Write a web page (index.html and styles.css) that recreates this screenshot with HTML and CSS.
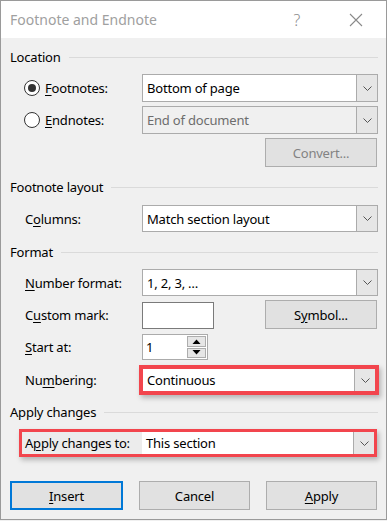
FILE: index.html
```html
<!DOCTYPE html>
<html>
<head>
<meta charset="utf-8">
<link rel="stylesheet" href="styles.css">
</head>
<body>
<div class="window">
  <div class="titlebar">
    <span class="title">Footnote and Endnote</span>
    <span class="help">?</span>
    <svg class="close" width="14" height="14" viewBox="0 0 14 14"><path d="M1 1L13 13M13 1L1 13" stroke="#8a8a8a" stroke-width="1.1" fill="none"/></svg>
  </div>
  <div class="content">
    <div class="group g-location"><span class="gl">Location</span><span class="line"></span></div>

    <div class="row r-foot">
      <label class="rlabel"><span class="radio checked"></span><span><u>F</u>ootnotes:</span></label>
      <div class="select"><span class="val">Bottom of page</span><span class="drop"><svg width="9" height="5" viewBox="0 0 9 5"><path d="M0.5 0.5L4.5 4.5L8.5 0.5" stroke="#555" fill="none"/></svg></span></div>
    </div>
    <div class="row r-end">
      <label class="rlabel"><span class="radio"></span><span><u>E</u>ndnotes:</span></label>
      <div class="select disabled"><span class="val">End of document</span><span class="drop"><svg width="9" height="5" viewBox="0 0 9 5"><path d="M0.5 0.5L4.5 4.5L8.5 0.5" stroke="#555" fill="none"/></svg></span></div>
    </div>
    <div class="row r-convert">
      <div class="btn disabled">Convert...</div>
    </div>

    <div class="group g-layout"><span class="gl">Footnote layout</span><span class="line"></span></div>
    <div class="row r-columns">
      <span class="label">C<u>o</u>lumns:</span>
      <div class="select"><span class="val">Match section layout</span><span class="drop"><svg width="9" height="5" viewBox="0 0 9 5"><path d="M0.5 0.5L4.5 4.5L8.5 0.5" stroke="#555" fill="none"/></svg></span></div>
    </div>

    <div class="group g-format"><span class="gl">Format</span><span class="line"></span></div>
    <div class="row r-number">
      <span class="label"><u>N</u>umber format:</span>
      <div class="select"><span class="val">1, 2, 3, …</span><span class="drop"><svg width="9" height="5" viewBox="0 0 9 5"><path d="M0.5 0.5L4.5 4.5L8.5 0.5" stroke="#555" fill="none"/></svg></span></div>
    </div>
    <div class="row r-custom">
      <span class="label">C<u>u</u>stom mark:</span>
      <div class="textbox"></div>
      <div class="btn symbol">S<u>y</u>mbol...</div>
    </div>
    <div class="row r-start">
      <span class="label"><u>S</u>tart at:</span>
      <div class="spin">
        <span class="spinval">1</span>
        <span class="spinbtns">
          <span class="sb"><svg width="9" height="5" viewBox="0 0 9 5"><path d="M0.5 5L4.5 0.5L8.5 5Z" fill="#000"/></svg></span>
          <span class="sb"><svg width="9" height="5" viewBox="0 0 9 5"><path d="M0.5 0L4.5 4.5L8.5 0Z" fill="#000"/></svg></span>
        </span>
      </div>
    </div>
    <div class="row r-numbering">
      <span class="label">Nu<u>m</u>bering:</span>
      <div class="select hl"><span class="val">Continuous</span><span class="drop"><svg width="9" height="5" viewBox="0 0 9 5"><path d="M0.5 0.5L4.5 4.5L8.5 0.5" stroke="#555" fill="none"/></svg></span></div>
    </div>

    <div class="group g-apply"><span class="gl">Apply changes</span><span class="line"></span></div>
    <div class="row r-applyto">
      <div class="hlbox">
        <span class="label">A<u>p</u>ply changes to:</span>
        <div class="select"><span class="val">This section</span><span class="drop"><svg width="9" height="5" viewBox="0 0 9 5"><path d="M0.5 0.5L4.5 4.5L8.5 0.5" stroke="#555" fill="none"/></svg></span></div>
      </div>
    </div>

    <div class="buttons">
      <div class="btn default"><u>I</u>nsert</div>
      <div class="btn">Cancel</div>
      <div class="btn"><u>A</u>pply</div>
    </div>
  </div>
</div>
</body>
</html>
```
FILE: styles.css
```css
* { box-sizing: border-box; }
html, body { margin: 0; padding: 0; background: #f0f0f0; }
body {
  font-family: "Noto Sans", "Open Sans", sans-serif;
  font-size: 13px;
  letter-spacing: -0.2px;
  color: #000;
}
u { text-decoration: underline; text-underline-offset: 2px; text-decoration-thickness: 1px; }
.window {
  width: 387px;
  height: 520px;
  border: 1px solid #9a9a9a;
  background: #f0f0f0;
  display: flex;
  flex-direction: column;
}
.titlebar {
  height: 37px;
  background: #fff;
  display: flex;
  align-items: center;
  padding-left: 9px;
  flex: none;
}
.title { font-size: 14px; letter-spacing: 0; color: #a0a0a0; flex: 1; }
.help { font-size: 16px; color: #8a8a8a; font-weight: 300; margin-right: 49px; }
.close { margin-right: 23px; }
.content {
  padding: 0 8px 0 9px;
  display: flex;
  flex-direction: column;
}
.group {
  height: 18px;
  display: flex;
  align-items: center;
}
.gl { white-space: nowrap; }
.line { flex: 1; height: 1px; background: #dadada; margin-left: 8px; }
.g-location { margin-top: 10px; }
.g-layout { margin-top: 11px; }
.g-format { margin-top: 11px; }
.g-apply { margin-top: 8px; }

.row { display: flex; align-items: center; }
.rlabel { display: flex; align-items: center; width: 132px; padding-left: 14px; flex: none; }
.label { width: 132px; padding-left: 15px; white-space: nowrap; flex: none; }
.radio {
  width: 16px; height: 16px; border-radius: 50%;
  border: 1.5px solid #333; background: #fff;
  margin-right: 5px; display: flex; align-items: center; justify-content: center;
}
.radio.checked::after { content: ""; width: 8px; height: 8px; border-radius: 50%; background: #333; }

.select {
  flex: 1;
  height: 100%;
  border: 1px solid #ababab;
  background: #fff;
  display: flex;
  align-items: stretch;
}
.select .val { flex: 1; display: flex; align-items: center; padding-left: 4px; white-space: nowrap; }
.select .drop {
  width: 21px; background: #e6e6e6; border-left: 1px solid #ababab;
  display: flex; align-items: center; justify-content: center;
}
.select.disabled { background: #f0f0f0; }
.select.disabled .val { color: #6d6d6d; }

.r-foot { margin-top: 8px; height: 28px; }
.r-end { margin-top: 4px; height: 28px; }
.r-convert { margin-top: 4px; height: 29px; justify-content: flex-end; }
.r-columns { margin-top: 9px; height: 27px; }
.r-number { margin-top: 8px; height: 27px; }
.r-custom { margin-top: 4px; height: 29px; }
.r-start { margin-top: 5px; height: 26px; }
.r-numbering { margin-top: 5px; height: 30px; }
.r-applyto { margin-top: 8px; height: 28px; padding-left: 9px; }

.btn {
  width: 112px; height: 100%;
  background: #e1e1e1; border: 1px solid #adadad;
  display: flex; align-items: center; justify-content: center;
}
.btn.disabled { color: #838383; }
.r-convert .btn, .symbol { margin-right: 1px; }

.textbox { width: 72px; height: 27px; align-self: flex-end; border: 1px solid #7a7a7a; background: #fff; }
.symbol { margin-left: auto; }

.spin { width: 66px; height: 100%; border: 1px solid #ababab; background: #fff; display: flex; }
.spinval { flex: 1; padding-left: 3px; display: flex; align-items: center; }
.spinbtns { display: flex; flex-direction: column; width: 20px; padding: 1px 1px 1px 0; gap: 1px; }
.sb { flex: 1; background: #e6e6e6; border: 1px solid #adadad; display: flex; align-items: center; justify-content: center; }

.select.hl {
  height: 24px;
  outline: 3px solid #f2454d;
  box-shadow: 2px 3px 5px 3px rgba(0,0,0,0.25);
  border-color: #f2454d;
  margin-right: 2px;
}
.hlbox {
  flex: 1; height: 100%;
  border: 3px solid #f2454d;
  display: flex;
  background: #ececec;
  box-shadow: 2px 3px 5px rgba(0,0,0,0.25);
  margin-right: 1px;
}
.hlbox .label { width: 120px; padding-left: 3px; display: flex; align-items: center; }
.hlbox .select { border: none; }
.hlbox .select .drop { border-left: 1px solid #ababab; }

.buttons {
  margin-top: 24px;
  height: 29px;
  display: flex;
  gap: 16px;
  padding-right: 1px;
}
.buttons .btn { flex: 1; width: auto; }
.btn.default { border: 2px solid #0078d7; }
```
